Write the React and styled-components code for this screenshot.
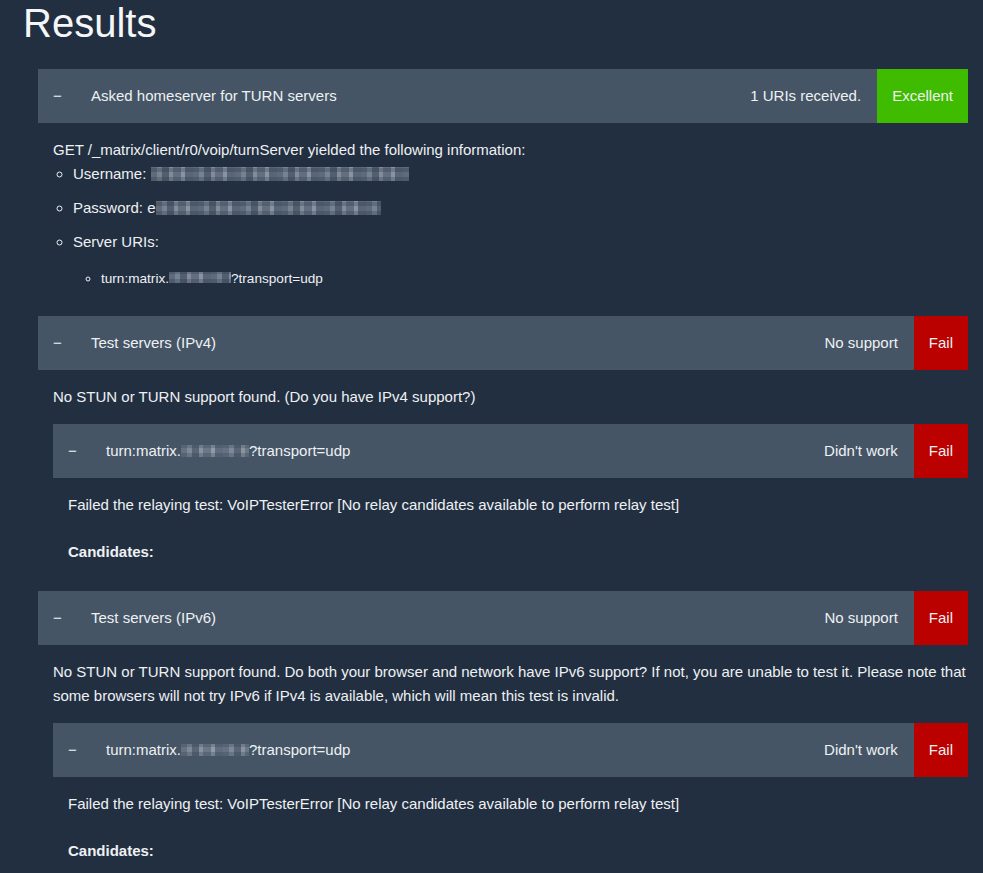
import styled, { createGlobalStyle } from "styled-components";

const GlobalStyle = createGlobalStyle`
  html, body {
    margin: 0;
    padding: 0;
    background-color: #222f40;
  }
  body {
    font-family: "Liberation Sans", Arial, sans-serif;
    font-size: 15px;
    line-height: 24px;
    color: #eef1f4;
  }
`;

const Page = styled.div`
  padding: 0 15px 0 23px;
`;

const Title = styled.h1`
  margin: 0 0 23px 0;
  font-size: 40px;
  font-weight: normal;
  line-height: 46px;
  color: #f4f6f8;
`;

const Sections = styled.div`
  padding-left: 15px;
`;

const Section = styled.div``;

const Header = styled.div`
  display: flex;
  align-items: center;
  height: 54px;
  background-color: #455565;
`;

const Toggle = styled.span`
  width: 38px;
  padding-left: 15px;
  flex-shrink: 0;
`;

const HeaderTitle = styled.span`
  flex: 1;
`;

const Status = styled.span`
  padding-right: 16px;
`;

const Badge = styled.span`
  display: flex;
  align-items: center;
  height: 100%;
  padding: 0 15px;
  background-color: ${({ $ok }) => ($ok ? "#3fbb00" : "#bb0000")};
`;

const Content = styled.div`
  padding: ${({ $nested }) => ($nested ? "15px" : "15px 0 12px 15px")};
  display: flex;
  flex-direction: column;
  gap: 15px;
`;

const Text = styled.div``;

const Candidates = styled.div`
  font-weight: bold;
  margin-top: 8px;
`;

const List = styled.ul`
  margin: 0;
  padding-left: 20px;
  list-style: circle;
`;

const Item = styled.li`
  & + & {
    margin-top: 10px;
  }
`;

const SubList = styled.ul`
  margin: 13px 0;
  padding-left: 28px;
  list-style: circle;
  font-size: 13.6px;
`;

const Mosaic = styled.span`
  display: inline-block;
  vertical-align: middle;
  width: ${({ $w }) => $w}px;
  height: ${({ $h }) => $h || 14}px;
  margin-top: -3px;
  opacity: 0.8;
  background:
    repeating-linear-gradient(0deg, rgba(34, 47, 64, 0.25) 0 4px, transparent 4px 9px),
    repeating-linear-gradient(90deg,
      #6c7a8a 0 6px, #8a97a6 6px 11px, #5d6b7c 11px 18px,
      #9aa3ad 18px 22px, #738090 22px 30px, #a4adb8 30px 34px, #667487 34px 42px);
`;

function SectionHeader({ title, status, badge, ok }) {
  return (
    <Header>
      <Toggle>−</Toggle>
      <HeaderTitle>{title}</HeaderTitle>
      <Status>{status}</Status>
      <Badge $ok={ok}>{badge}</Badge>
    </Header>
  );
}

function ServerTest({ mosaicWidth }) {
  return (
    <Section>
      <SectionHeader
        title={<>turn:matrix.<Mosaic $w={mosaicWidth} $h={12} />?transport=udp</>}
        status="Didn't work"
        badge="Fail"
      />
      <Content $nested>
        <Text>Failed the relaying test: VoIPTesterError [No relay candidates available to perform relay test]</Text>
        <Candidates>Candidates:</Candidates>
      </Content>
    </Section>
  );
}

function App() {
  return (
    <>
      <GlobalStyle />
      <Page>
        <Title>Results</Title>
        <Sections>
          <Section>
            <SectionHeader
              title="Asked homeserver for TURN servers"
              status="1 URIs received."
              badge="Excellent"
              ok
            />
            <Content>
              <div>
                <Text>GET /_matrix/client/r0/voip/turnServer yielded the following information:</Text>
                <List>
                  <Item>Username: <Mosaic $w={258} /></Item>
                  <Item>Password: e<Mosaic $w={225} /></Item>
                  <Item>
                    Server URIs:
                    <SubList>
                      <Item>turn:matrix.<Mosaic $w={62} $h={11} />?transport=udp</Item>
                    </SubList>
                  </Item>
                </List>
              </div>
            </Content>
          </Section>

          <Section>
            <SectionHeader title="Test servers (IPv4)" status="No support" badge="Fail" />
            <Content>
              <Text>No STUN or TURN support found. (Do you have IPv4 support?)</Text>
              <ServerTest mosaicWidth={68} />
            </Content>
          </Section>

          <Section>
            <SectionHeader title="Test servers (IPv6)" status="No support" badge="Fail" />
            <Content>
              <Text>
                No STUN or TURN support found. Do both your browser and network have IPv6 support? If not, you are unable to test it. Please note that some browsers will not try IPv6 if IPv4 is available, which will mean this test is invalid.
              </Text>
              <ServerTest mosaicWidth={68} />
            </Content>
          </Section>
        </Sections>
      </Page>
    </>
  );
}

export default App;
